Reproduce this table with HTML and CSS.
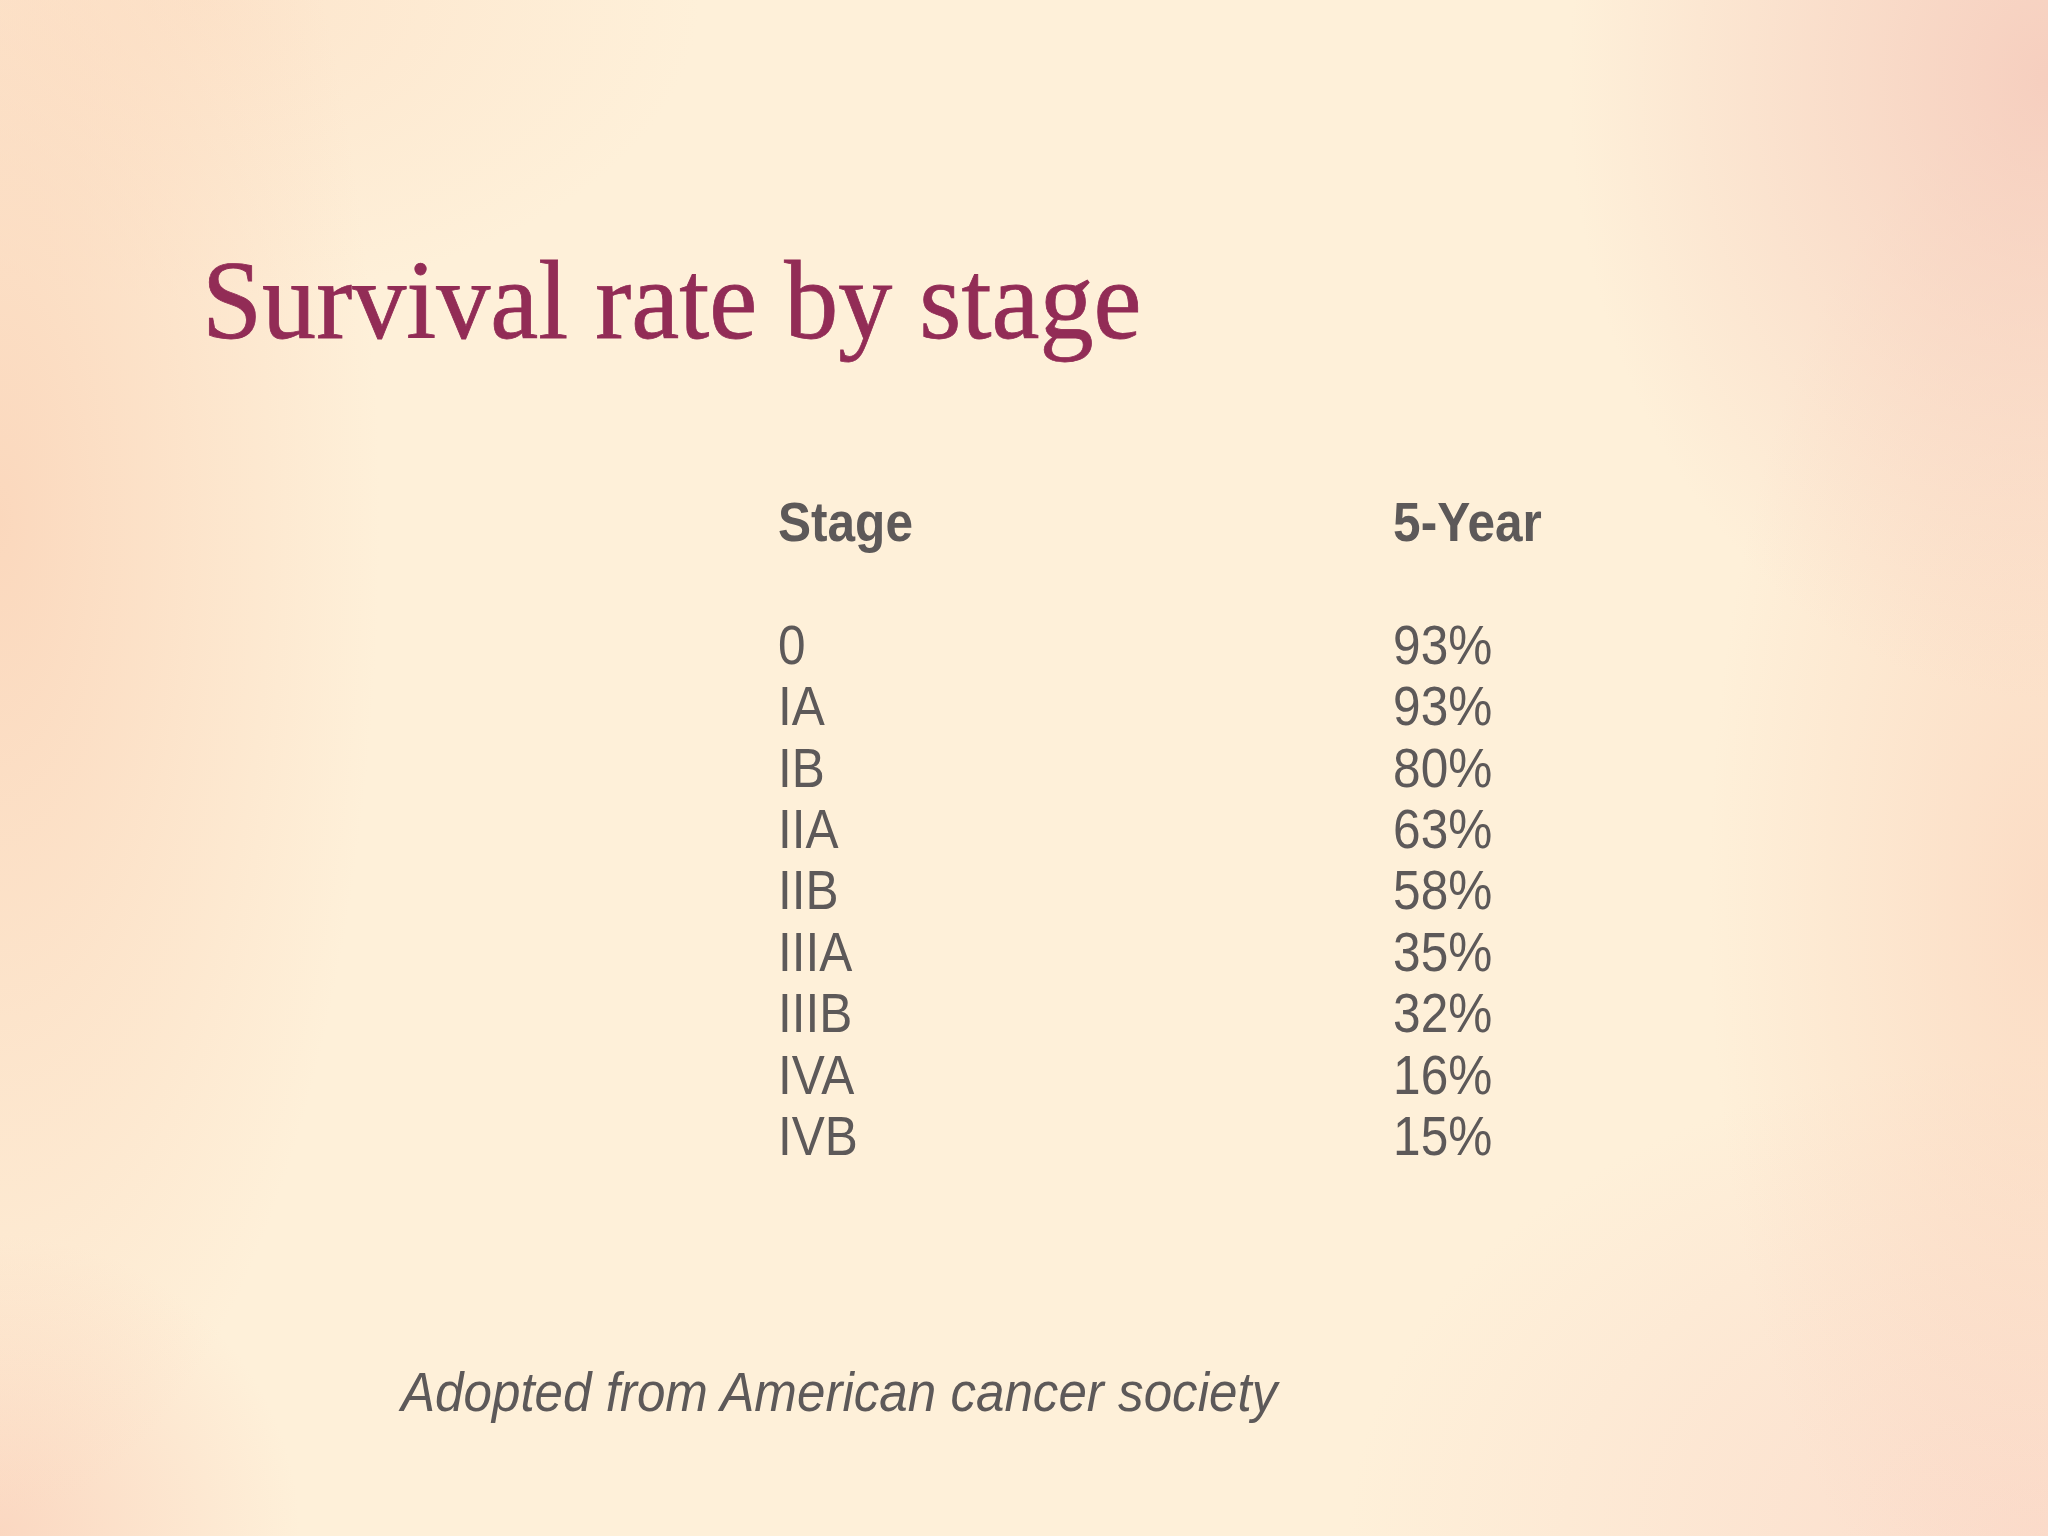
FILE: index.html
```html
<!DOCTYPE html>
<html lang="en">
<head>
<meta charset="utf-8">
<title>Survival rate by stage</title>
<link rel="stylesheet" href="styles.css">
</head>
<body>
<main class="slide">
  <h1 class="title">Survival rate by stage</h1>
  <div class="table">
    <div class="cell head">Stage</div><div class="cell head">5-Year</div>
    <div class="cell blank">&nbsp;</div><div class="cell blank">&nbsp;</div>
    <div class="cell">0</div><div class="cell">93%</div>
    <div class="cell">IA</div><div class="cell">93%</div>
    <div class="cell">IB</div><div class="cell">80%</div>
    <div class="cell">IIA</div><div class="cell">63%</div>
    <div class="cell">IIB</div><div class="cell">58%</div>
    <div class="cell">IIIA</div><div class="cell">35%</div>
    <div class="cell">IIIB</div><div class="cell">32%</div>
    <div class="cell">IVA</div><div class="cell">16%</div>
    <div class="cell">IVB</div><div class="cell">15%</div>
  </div>
  <p class="source">Adopted from American cancer society</p>
</main>
</body>
</html>
```
FILE: styles.css
```css
html, body {
  margin: 0;
  padding: 0;
}
body {
  width: 2048px;
  height: 1536px;
  overflow: hidden;
}
.slide {
  box-sizing: border-box;
  width: 2048px;
  height: 1536px;
  padding-top: 244px;
  display: flex;
  flex-direction: column;
  align-items: flex-start;
  background:
    radial-gradient(ellipse 480px 620px at 2048px 80px, rgba(244, 198, 184, 0.8), rgba(244, 198, 184, 0) 100%),
    radial-gradient(ellipse 340px 800px at 2048px 900px, rgba(249, 204, 180, 0.55), rgba(249, 204, 180, 0) 100%),
    radial-gradient(ellipse 700px 480px at 2048px 1536px, rgba(250, 214, 200, 0.75), rgba(250, 214, 200, 0) 100%),
    radial-gradient(ellipse 380px 1000px at 0px 520px, rgba(250, 210, 182, 0.8), rgba(250, 210, 182, 0) 100%),
    radial-gradient(ellipse 500px 300px at 200px 0px, rgba(252, 222, 196, 0.6), rgba(252, 222, 196, 0) 100%),
    radial-gradient(ellipse 300px 300px at 0px 1536px, rgba(249, 202, 180, 0.65), rgba(249, 202, 180, 0) 100%),
    #fef0d9;
  color: #5d5959;
}
.title {
  margin: 0 0 0 202px;
  font-family: "Liberation Serif", "DejaVu Serif", serif;
  font-weight: normal;
  font-size: 112px;
  line-height: 112px;
  color: #922c56;
  -webkit-text-stroke: 0.8px #922c56;
  white-space: nowrap;
  transform: scaleX(0.965);
  transform-origin: left center;
}
.table {
  margin: 135px 0 0 778px;
  display: grid;
  grid-template-columns: 695px auto;
  font-family: "Liberation Sans", Arial, sans-serif;
  font-size: 56px;
  line-height: 61.4px;
  transform: scaleX(0.885);
  transform-origin: left center;
}
.cell {
  white-space: nowrap;
}
.head {
  font-weight: bold;
}
.source {
  margin: 195px 0 0 401px;
  font-family: "Liberation Sans", Arial, sans-serif;
  font-style: italic;
  font-size: 56px;
  line-height: 61.4px;
  white-space: nowrap;
  transform: scaleX(0.913);
  transform-origin: left center;
}
```
